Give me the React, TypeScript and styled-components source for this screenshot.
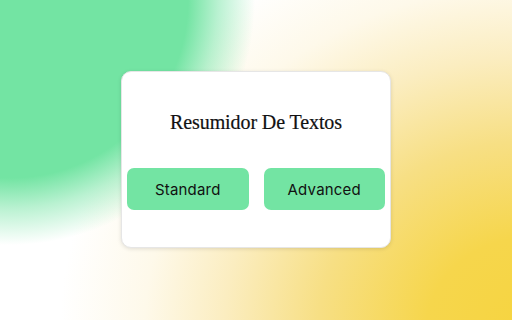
import styled, { createGlobalStyle } from 'styled-components'

const GlobalStyle = createGlobalStyle`
  html, body {
    margin: 0;
    padding: 0;
  }
  body {
    font-family: 'Liberation Sans', Arial, sans-serif;
  }
`

const Page = styled.div`
  width: 512px;
  height: 320px;
  display: flex;
  align-items: center;
  justify-content: center;
  overflow: hidden;
  background:
    radial-gradient(circle at 10px 0px, #73e4a3 0, #73e4a3 178px, rgba(115, 228, 163, 0.5) 208px, rgba(115, 228, 163, 0) 245px),
    radial-gradient(ellipse 470px 420px at 530px 330px, #f6d43f 0, #f6d64c 22%, #f7df84 45%, #fbedc0 65%, #fef9ea 82%, rgba(255, 255, 255, 0) 100%),
    #ffffff;
`

const Card = styled.div`
  box-sizing: border-box;
  width: 270px;
  height: 177px;
  margin-top: -1px;
  background: #ffffff;
  border: 1px solid #e6e6e6;
  border-radius: 10px;
  box-shadow: 0 1px 4px rgba(0, 0, 0, 0.12);
  display: flex;
  flex-direction: column;
  align-items: center;
  padding: 36px 5px 0 5px;
`

const Title = styled.h1`
  margin: 0;
  font-family: 'Liberation Serif', 'Times New Roman', serif;
  font-weight: 400;
  font-size: 20px;
  letter-spacing: -0.1px;
  color: #111;
  line-height: 28px;
  -webkit-text-stroke: 0.2px #111;
`

const ButtonRow = styled.div`
  display: grid;
  grid-template-columns: 1fr 1fr;
  gap: 15px;
  width: 100%;
  margin-top: 32px;
`

const ModeButton = styled.button`
  height: 42px;
  border: none;
  border-radius: 7px;
  background: #73e4a3;
  color: #111;
  font-family: 'Inter', 'Noto Sans', sans-serif;
  font-size: 15px;
  font-weight: 400;
  letter-spacing: 0.2px;
  cursor: pointer;
`

export default function App() {
  return (
    <>
      <GlobalStyle />
      <Page>
        <Card>
          <Title>Resumidor De Textos</Title>
          <ButtonRow>
            <ModeButton>Standard</ModeButton>
            <ModeButton>Advanced</ModeButton>
          </ButtonRow>
        </Card>
      </Page>
    </>
  )
}
